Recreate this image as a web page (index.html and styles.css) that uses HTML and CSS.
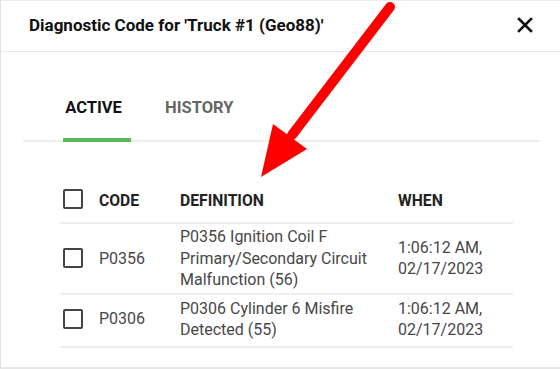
FILE: index.html
```html
<!DOCTYPE html>
<html>
<head>
<meta charset="utf-8">
<link rel="stylesheet" href="styles.css">
</head>
<body>
<div class="dialog">
  <div class="header">
    <div class="title">Diagnostic Code for 'Truck #1 (Geo88)'</div>
    <svg class="close" width="16" height="16" viewBox="0 0 16 16"><path d="M2 2 L14 14 M14 2 L2 14" stroke="#111" stroke-width="2.6" stroke-linecap="square"/></svg>
  </div>
  <div class="content">
    <div class="tabs">
      <div class="tab active">ACTIVE</div>
      <div class="tab">HISTORY</div>
    </div>
    <div class="table">
      <div class="row head">
        <div class="cell"><span class="cb"></span></div>
        <div class="cell">CODE</div>
        <div class="cell def">DEFINITION</div>
        <div class="cell">WHEN</div>
      </div>
      <div class="row">
        <div class="cell"><span class="cb"></span></div>
        <div class="cell">P0356</div>
        <div class="cell def">P0356 Ignition Coil F Primary/Secondary Circuit Malfunction (56)</div>
        <div class="cell">1:06:12 AM,<br>02/17/2023</div>
      </div>
      <div class="row">
        <div class="cell"><span class="cb"></span></div>
        <div class="cell">P0306</div>
        <div class="cell def">P0306 Cylinder 6 Misfire Detected (55)</div>
        <div class="cell">1:06:12 AM,<br>02/17/2023</div>
      </div>
    </div>
  </div>
</div>
<svg class="arrow" width="560" height="369" viewBox="0 0 560 369">
  <line x1="390" y1="7" x2="292" y2="135" stroke="#ff0000" stroke-width="10" stroke-linecap="round"/>
  <polygon points="273,124 307,149 261,177" fill="#ff0000"/>
</svg>
</body>
</html>
```
FILE: styles.css
```css
html, body {
  margin: 0;
  padding: 0;
  background: #fff;
}
body {
  width: 560px;
  height: 369px;
  overflow: hidden;
  position: relative;
  font-family: Roboto, "Liberation Sans", sans-serif;
}
.dialog {
  height: 366px;
  border-left: 1px solid #e2e2e2;
  border-top: 1px solid #ececec;
  border-bottom: 2px solid #e6e6e6;
  box-sizing: content-box;
}
.header {
  height: 50px;
  border-bottom: 1px solid #e8e8e8;
  display: flex;
  align-items: center;
  justify-content: space-between;
  padding: 0 27px 0 28px;
}
.title {
  font-size: 17px;
  font-weight: 700;
  color: #111;
  padding-bottom: 2px;
}
.close {
  display: block;
  margin-bottom: 2px;
}
.content {
  padding: 0 20px 0 22px;
}
.tabs {
  display: flex;
  height: 88px;
  border-bottom: 2px solid #eeeeee;
  padding-left: 40px;
  align-items: stretch;
}
.tab {
  font-size: 16.5px;
  line-height: 20px;
  font-weight: 700;
  color: #666;
  display: flex;
  align-items: flex-start;
  justify-content: center;
  padding-top: 46px;
  box-sizing: border-box;
  border-bottom: 4px solid transparent;
  margin-bottom: -2px;
}
.tab.active {
  width: 68px;
  color: #111;
  border-bottom-color: #5cb85c;
  padding-right: 7px;
}
.tab + .tab {
  margin-left: 34px;
}
.table {
  margin: 34px 0 0 37px;
  width: 453px;
}
.row {
  display: grid;
  grid-template-columns: 39px 81px 218px 1fr;
  align-items: center;
  border-bottom: 2px solid #eeeeee;
  font-size: 16px;
  line-height: 21.5px;
  color: #474747;
  padding: 2px 0;
}
.row.head {
  height: 46px;
  padding: 0 0 0;
  font-weight: 700;
  color: #222;
  font-size: 15.7px;
}
.row.head .cell {
  padding-top: 4px;
}
.row:nth-child(3) {
  padding: 3px 0 5px;
}
.cell.def {
  padding-right: 10px;
}
.cb {
  display: block;
  width: 16px;
  height: 16px;
  border: 2px solid #444;
  border-radius: 2px;
  margin-left: 3px;
}
.row.head .cb {
  margin-top: -4px;
}
.arrow {
  position: absolute;
  left: 0;
  top: 0;
  pointer-events: none;
}
```
